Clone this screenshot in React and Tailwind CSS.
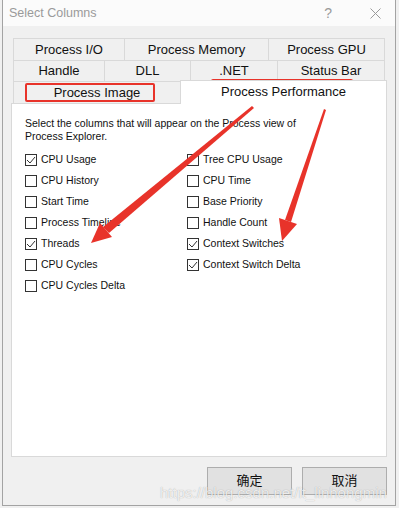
import React from 'react';

const font = "font-['Liberation_Sans','Noto_Sans_CJK_SC',sans-serif]";

const row1 = [
  { label: 'Process I/O', w: 'w-[111px]' },
  { label: 'Process Memory', w: 'w-[144px]' },
  { label: 'Process GPU', w: 'flex-1' },
];
const row2 = [
  { label: 'Handle', w: 'w-[91px]' },
  { label: 'DLL', w: 'w-[86px]' },
  { label: '.NET', w: 'w-[87px]' },
  { label: 'Status Bar', w: 'flex-1' },
];

const leftCols = [
  ['CPU Usage', true],
  ['CPU History', false],
  ['Start Time', false],
  ['Process Timeline', false],
  ['Threads', true],
  ['CPU Cycles', false],
  ['CPU Cycles Delta', false],
];
const rightCols = [
  ['Tree CPU Usage', false],
  ['CPU Time', false],
  ['Base Priority', false],
  ['Handle Count', false],
  ['Context Switches', true],
  ['Context Switch Delta', true],
];

const Check = ({ label, checked }) => (
  <div className="flex h-[21px] items-center gap-[4px] whitespace-nowrap">
    <div className="w-[12px] h-[12px] border border-[#333] bg-white flex items-center justify-center shrink-0">
      {checked && (
        <svg width="10" height="10" viewBox="0 0 10 10">
          <path d="M1 5 L4 8 L9 2" fill="none" stroke="#333" strokeWidth="1" />
        </svg>
      )}
    </div>
    <span className="text-[10.5px] text-[#111]">{label}</span>
  </div>
);

const Tab = ({ label, w, last }) => (
  <div className={`${w} h-full flex items-center justify-center border-l border-t border-[#d9d9d9] ${last ? 'border-r' : ''} text-[13px] text-[#111]`}>
    {label}
  </div>
);

export default function App() {
  return (
    <div className={`relative w-[399px] h-[508px] bg-[#f0f0f0] overflow-hidden ${font}`}>
      <div className="ml-[2px] w-[394px] h-[506px] border-x border-b border-[#a3a3a3] flex flex-col bg-[#f0f0f0]">
        {/* title bar */}
        <div className="h-[26px] bg-[#fbfbfb] flex items-center pl-[6px] pr-[14px] text-[12.5px] text-[#9a9a9a]">
          <span className="flex-1">Select Columns</span>
          <span className="mr-[38px] text-[14px]">?</span>
          <svg width="11" height="11" viewBox="0 0 11 11">
            <path d="M0.5 0.5 L10.5 10.5 M10.5 0.5 L0.5 10.5" stroke="#9a9a9a" strokeWidth="1" />
          </svg>
        </div>

        {/* body */}
        <div className="flex-1 flex flex-col pt-[12px] px-[8px]">
          <div className="flex flex-col mx-[2px]">
            <div className="flex h-[22px]">
              {row1.map((t, i) => <Tab key={t.label} {...t} last={i === row1.length - 1} />)}
            </div>
            <div className="flex h-[21px]">
              {row2.map((t, i) => <Tab key={t.label} {...t} last={i === row2.length - 1} />)}
            </div>
            <div className="flex h-[22px] items-end">
              <div className="w-[167px] h-[22px] flex items-center justify-center border-l border-t border-[#d9d9d9] text-[13px] text-[#111]">
                Process Image
              </div>
              <div className="relative z-10 flex-1 -mr-[2px] h-[24px] mb-[-1px] bg-white flex items-center justify-center border-x border-t border-[#d9d9d9] text-[13px] text-[#111] pb-[2px]">
                Process Performance
              </div>
            </div>
          </div>

          <div className="h-[354px] bg-white border border-[#d9d9d9] pt-[13px] pl-[13px]">
            <p className="text-[10.5px] leading-[13px] text-[#111]">
              Select the columns that will appear on the Process view of<br />Process Explorer.
            </p>
            <div className="flex mt-[6px]">
              <div className="w-[162px] flex flex-col">
                {leftCols.map(([l, c]) => <Check key={l} label={l} checked={c} />)}
              </div>
              <div className="flex flex-col">
                {rightCols.map(([l, c]) => <Check key={l} label={l} checked={c} />)}
              </div>
            </div>
          </div>

          <div className="flex justify-end gap-[10px] mt-[10px]">
            <button className="w-[85px] h-[28px] bg-[#e1e1e1] border border-[#adadad] text-[13px] text-[#111]">确定</button>
            <button className="w-[85px] h-[28px] bg-[#e1e1e1] border border-[#adadad] text-[13px] text-[#111]">取消</button>
          </div>
        </div>
      </div>

      {/* annotations */}
      <div className="absolute left-[25px] top-[83px] w-[130px] h-[19px] border-2 border-[#e8332a] rounded-[2px]" />
      <div className="absolute left-[211px] top-[79px] w-[142px] h-[23px] border-2 border-[#e8332a] rounded-[2px]" />
      <svg className="absolute left-0 top-0" width="399" height="508" viewBox="0 0 399 508">
        <polygon points="252,106 254,108 109,233 103,227" fill="#e8332a" />
        <polygon points="91,243 100,223 112,237" fill="#e8332a" />
        <polygon points="324,109 326,110 291,222 285,220" fill="#e8332a" />
        <polygon points="282,241 279,218 297,224" fill="#e8332a" />
      </svg>
      <div className="absolute left-[160px] top-[482px] text-[15px] text-white/80 [text-shadow:0_0_1px_rgba(0,0,0,0.35)] font-['Liberation_Sans',sans-serif] whitespace-nowrap">
        https://blog.csdn.net/it_linhongmin
      </div>
    </div>
  );
}
